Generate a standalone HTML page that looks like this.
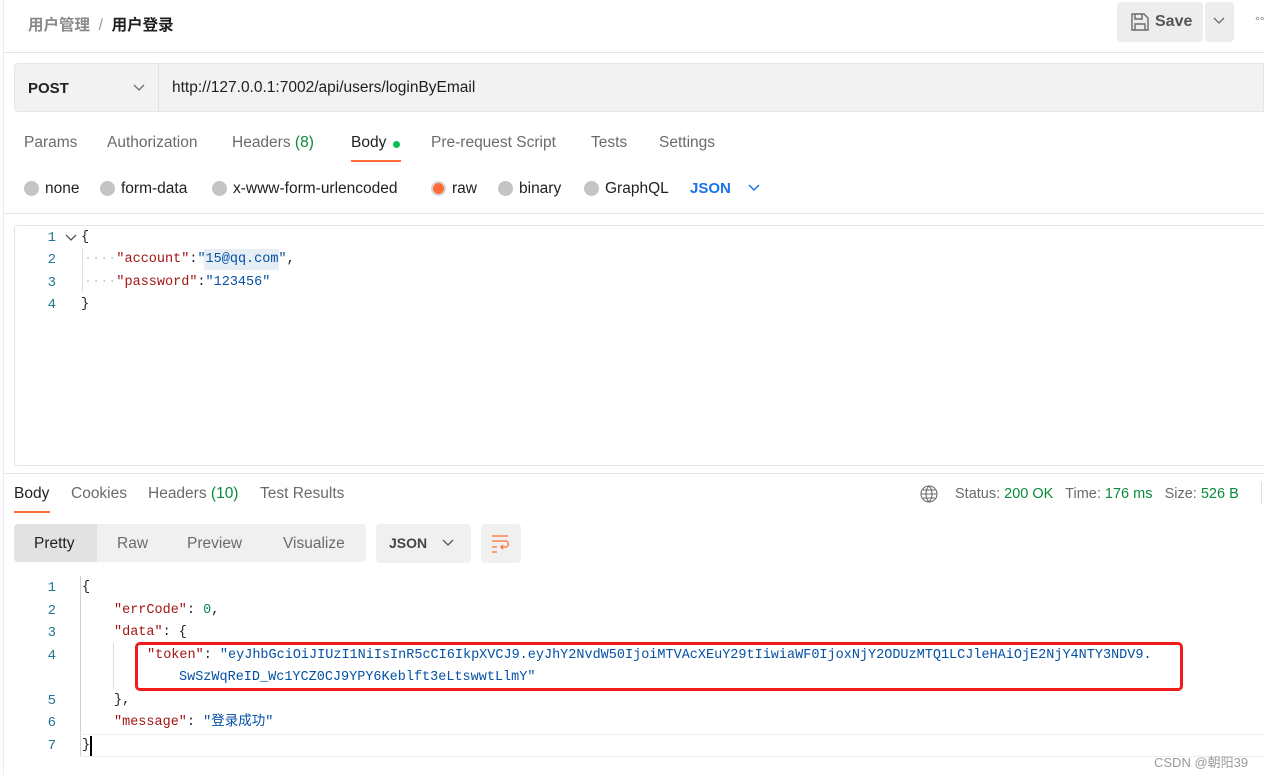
<!DOCTYPE html>
<html><head><meta charset="utf-8"><style>
*{margin:0;padding:0;box-sizing:border-box}
body{width:1264px;height:775px;background:#fff;position:relative;overflow:hidden;font-family:"Liberation Sans","Noto Sans CJK SC",sans-serif;color:#212121}
.a{position:absolute;white-space:nowrap}
.t{font-size:15.5px;color:#6b6b6b}
.mono{font-family:"Liberation Mono","Noto Sans CJK SC",monospace;font-size:13.5px;line-height:18px}
.ln{color:#237893;font-family:"Liberation Mono",monospace;font-size:14px;width:20px;text-align:right;line-height:18px}
.k{color:#a31515}.s{color:#0451a5}.n{color:#098658}
.rad{position:absolute;width:15px;height:15px;border-radius:50%;background:#c4c4c4}
.hr{position:absolute;left:3px;right:0;height:1px;background:#e6e6e6}
</style></head><body>
<div class="a" style="left:3px;top:0;width:1px;height:775px;background:#ececec"></div>
<div class="a" style="left:28px;top:13px;font-size:15.5px;font-weight:bold;color:#8a8a8a">用户管理 &nbsp;<span style="font-weight:normal;color:#999">/</span>&nbsp; <span style="color:#212121">用户登录</span></div>
<div class="a" style="left:1117px;top:2px;width:86px;height:40px;background:#ededed;border-radius:4px"></div>
<svg class="a" style="left:1130px;top:12px" width="20" height="20" viewBox="0 0 20 20" fill="none" stroke="#6b6b6b" stroke-width="1.4"><path d="M2 2h12l4 4v12H2z"/><path d="M5 2v5h7V2M5 18v-6h10v6"/></svg>
<div class="a" style="left:1155px;top:13px;font-size:16px;font-weight:bold;color:#555">Save</div>
<div class="a" style="left:1205px;top:2px;width:29px;height:40px;background:#ededed;border-radius:4px"></div>
<svg class="a" style="left:1212px;top:16px" width="14" height="10"><path d="M2 2l5 5 5-5" fill="none" stroke="#6b6b6b" stroke-width="1.3"/></svg>
<div class="a" style="left:1255px;top:14px;font-size:12px;color:#777">°°</div>
<div class="hr" style="top:52px"></div>
<div class="a" style="left:14px;top:63px;width:1250px;height:49px;background:#f2f2f2;border:1px solid #e6e6e6;border-radius:4px 0 0 4px"></div>
<div class="a" style="left:158px;top:63px;width:1px;height:49px;background:#e2e2e2"></div>
<div class="a" style="left:28px;top:80px;font-size:15px;font-weight:bold;color:#212121">POST</div>
<svg class="a" style="left:132px;top:83px" width="14" height="10"><path d="M2 2l5 5 5-5" fill="none" stroke="#6b6b6b" stroke-width="1.3"/></svg>
<div class="a" style="left:172px;top:79px;font-size:15.5px;color:#212121">http://127.0.0.1:7002/api/users/loginByEmail</div>
<div class="a t" style="left:24px;top:134px">Params</div>
<div class="a t" style="left:107px;top:134px">Authorization</div>
<div class="a t" style="left:232px;top:134px">Headers <span style="color:#0a8a3a">(8)</span></div>
<div class="a t" style="left:351px;top:134px;color:#212121">Body</div>
<div class="a" style="left:393px;top:141px;width:7px;height:7px;border-radius:50%;background:#0cbb52"></div>
<div class="a" style="left:351px;top:160px;width:50px;height:2px;background:#ff6c37"></div>
<div class="a t" style="left:431px;top:134px">Pre-request Script</div>
<div class="a t" style="left:591px;top:134px">Tests</div>
<div class="a t" style="left:659px;top:134px">Settings</div>
<div class="rad" style="left:24px;top:181px"></div><div class="a t" style="left:45px;top:180px;color:#212121">none</div>
<div class="rad" style="left:100px;top:181px"></div><div class="a t" style="left:121px;top:180px;color:#212121">form-data</div>
<div class="rad" style="left:212px;top:181px"></div><div class="a t" style="left:233px;top:180px;color:#212121">x-www-form-urlencoded</div>
<div class="rad" style="left:431px;top:181px;background:#ff6c37;border:2px solid #d6d6d6"></div><div class="a t" style="left:452px;top:180px;color:#212121">raw</div>
<div class="rad" style="left:498px;top:181px"></div><div class="a t" style="left:519px;top:180px;color:#212121">binary</div>
<div class="rad" style="left:584px;top:181px"></div><div class="a t" style="left:605px;top:180px;color:#212121">GraphQL</div>
<div class="a" style="left:690px;top:180px;font-size:15px;font-weight:bold;color:#1a73e8">JSON</div>
<svg class="a" style="left:747px;top:183px" width="14" height="10"><path d="M2 2l5 5 5-5" fill="none" stroke="#1a73e8" stroke-width="1.5"/></svg>
<div class="hr" style="top:213px"></div>
<div class="a" style="left:14px;top:225px;width:1260px;height:241px;border:1px solid #e6e6e6;border-radius:3px"></div>
<div class="a ln" style="left:36px;top:229px">1</div>
<svg class="a" style="left:64px;top:233px" width="14" height="10"><path d="M2 2l5 5 5-5" fill="none" stroke="#555" stroke-width="1.3"/></svg>
<div class="a mono" style="left:81px;top:229px">{</div>
<div class="a ln" style="left:36px;top:251px">2</div>
<div class="a" style="left:82px;top:248px;width:1px;height:44px;background:#ddd"></div>
<div class="a" style="left:204px;top:249px;width:75px;height:21px;background:#e6edf5"></div>
<div class="a mono" style="left:84px;top:251px"><span style="color:#ccc">····</span><span class="k">"account"</span>:<span class="s">"15@qq.com"</span>,</div>
<div class="a ln" style="left:36px;top:274px">3</div>
<div class="a mono" style="left:84px;top:274px"><span style="color:#ccc">····</span><span class="k">"password"</span>:<span class="s">"123456"</span></div>
<div class="a ln" style="left:36px;top:296px">4</div>
<div class="a mono" style="left:81px;top:296px">}</div>
<div class="hr" style="top:473px"></div>
<div class="a" style="left:14px;top:485px;font-size:15.5px;color:#212121">Body</div>
<div class="a" style="left:14px;top:511px;width:36px;height:2px;background:#ff6c37"></div>
<div class="a t" style="left:71px;top:485px">Cookies</div>
<div class="a t" style="left:148px;top:485px">Headers <span style="color:#0a8a3a">(10)</span></div>
<div class="a t" style="left:260px;top:485px">Test Results</div>
<svg class="a" style="left:920px;top:485px" width="18" height="18" viewBox="0 0 18 18" fill="none" stroke="#6b6b6b" stroke-width="1.1"><circle cx="9" cy="9" r="8"/><path d="M1 9h16M9 1c-4 4-4 12 0 16M9 1c4 4 4 12 0 16M3 5h12M3 13h12"/></svg>
<div class="a" style="left:955px;top:486px;font-size:14.5px;color:#6b6b6b">Status: <span style="color:#0a8a3a">200 OK</span>&nbsp;&nbsp; Time: <span style="color:#0a8a3a">176 ms</span>&nbsp;&nbsp; Size: <span style="color:#0a8a3a">526 B</span></div>
<div class="a" style="left:1261px;top:482px;width:1px;height:22px;background:#ddd"></div>
<div class="a" style="left:14px;top:524px;width:352px;height:38px;background:#f0f0f0;border-radius:4px"></div>
<div class="a" style="left:14px;top:524px;width:83px;height:38px;background:#e2e2e2;border-radius:4px 0 0 4px"></div>
<div class="a" style="left:34px;top:535px;font-size:15.5px;color:#212121">Pretty</div>
<div class="a t" style="left:117px;top:535px">Raw</div>
<div class="a t" style="left:187px;top:535px">Preview</div>
<div class="a t" style="left:283px;top:535px">Visualize</div>
<div class="a" style="left:376px;top:524px;width:95px;height:39px;background:#f0f0f0;border-radius:4px"></div>
<div class="a" style="left:389px;top:535px;font-size:14px;font-weight:bold;color:#444">JSON</div>
<svg class="a" style="left:441px;top:538px" width="14" height="10"><path d="M2 2l5 5 5-5" fill="none" stroke="#555" stroke-width="1.3"/></svg>
<div class="a" style="left:481px;top:524px;width:40px;height:39px;background:#f0f0f0;border-radius:4px"></div>
<svg class="a" style="left:490px;top:533px" width="22" height="22" viewBox="0 0 22 22" fill="none" stroke="#ff6c37" stroke-width="1.3"><path d="M2 3h16M2 8h14c3 0 3 6 0 6h-5M13 12l-2 2 2 2M2 14h5M2 19h5"/></svg>
<div class="a" style="left:80px;top:576px;width:1px;height:181px;background:#d0d0d0"></div>
<div class="a" style="left:80px;top:734px;width:1184px;height:23px;border-top:1px solid #eee;border-bottom:1px solid #eee"></div>
<div class="a" style="left:90px;top:736px;width:2px;height:20px;background:#000"></div>
<div class="a" style="left:113px;top:643px;width:1px;height:46px;background:#ddd"></div>
<div class="a ln" style="left:36px;top:579px">1</div><div class="a mono" style="left:82px;top:579px">{</div>
<div class="a ln" style="left:36px;top:602px">2</div><div class="a mono" style="left:114px;top:602px"><span class="k">"errCode"</span>: <span class="n">0</span>,</div>
<div class="a ln" style="left:36px;top:624px">3</div><div class="a mono" style="left:114px;top:624px"><span class="k">"data"</span>: {</div>
<div class="a ln" style="left:36px;top:647px">4</div><div class="a mono" style="left:147px;top:647px"><span class="k">"token"</span>: <span class="s">"eyJhbGciOiJIUzI1NiIsInR5cCI6IkpXVCJ9.eyJhY2NvdW50IjoiMTVAcXEuY29tIiwiaWF0IjoxNjY2ODUzMTQ1LCJleHAiOjE2NjY4NTY3NDV9.</span></div>
<div class="a mono s" style="left:179px;top:669px">SwSzWqReID_Wc1YCZ0CJ9YPY6Keblft3eLtswwtLlmY"</div>
<div class="a ln" style="left:36px;top:692px">5</div><div class="a mono" style="left:114px;top:692px">},</div>
<div class="a ln" style="left:36px;top:714px">6</div><div class="a mono" style="left:114px;top:714px"><span class="k">"message"</span>: <span class="s">"登录成功"</span></div>
<div class="a ln" style="left:36px;top:737px">7</div><div class="a mono" style="left:82px;top:737px">}</div>
<div class="a" style="left:135px;top:642px;width:1048px;height:49px;border:3px solid #f01c1c;border-radius:5px"></div>
<div class="a" style="left:1154px;top:752px;font-size:13px;color:#9a9a9a">CSDN @朝阳39</div>
</body></html>
